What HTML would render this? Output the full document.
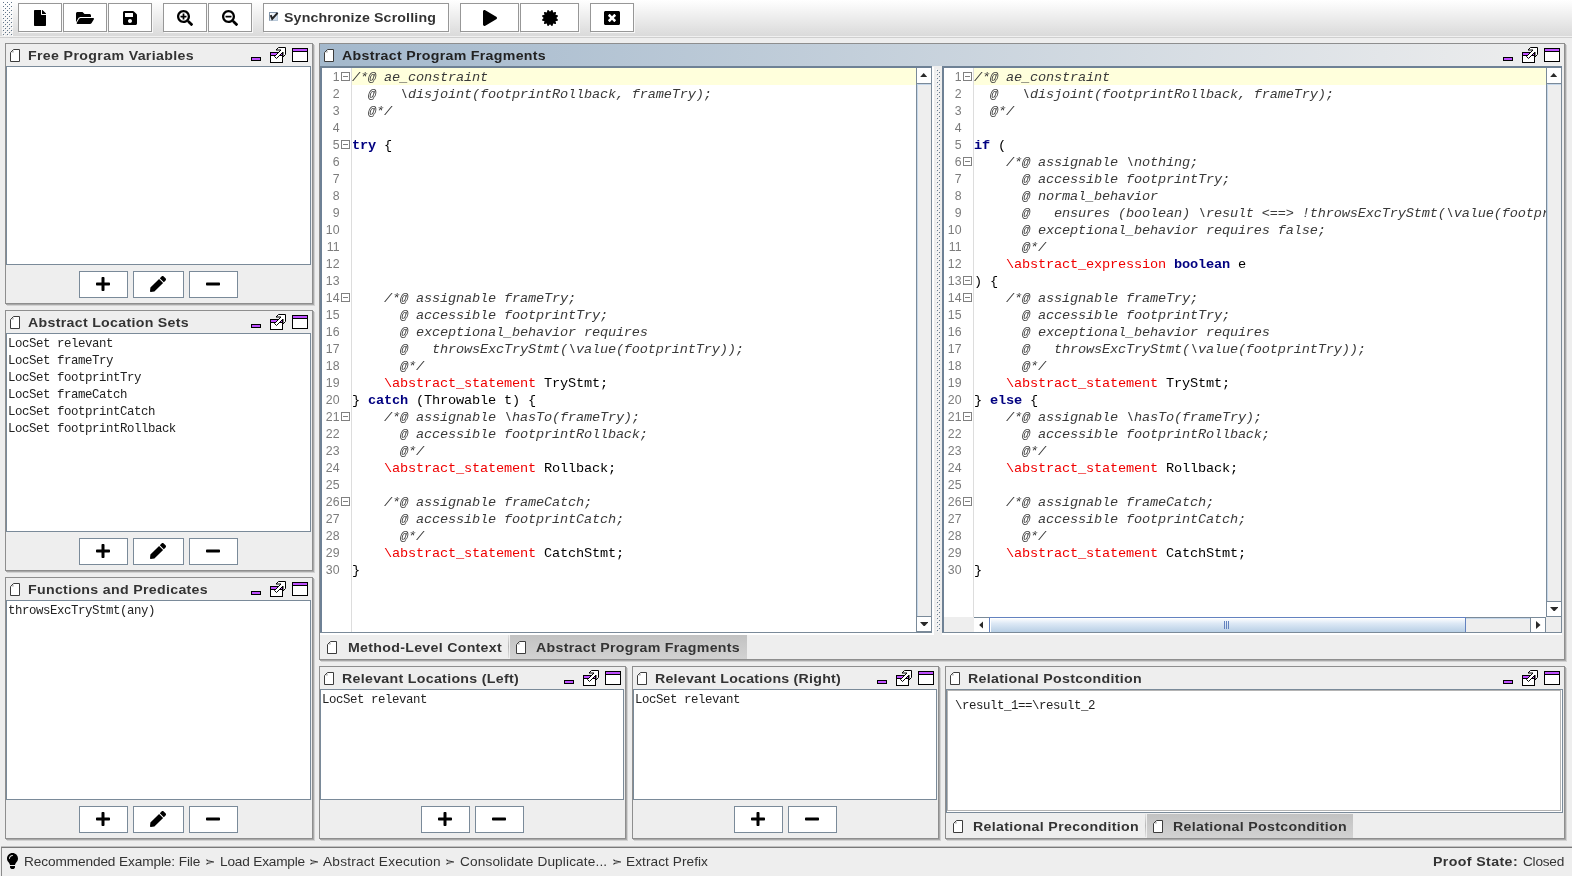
<!DOCTYPE html>
<html><head><meta charset="utf-8"><title>REFINITY</title><style>
html,body{margin:0;padding:0}
body{width:1572px;height:878px;background:#eeeeee;position:relative;overflow:hidden;font-family:"Liberation Sans",sans-serif}
div,span,svg{position:absolute;display:block}
.t,.m,.cl,.ln{will-change:transform}
.t{white-space:pre;font-family:"Liberation Sans",sans-serif}
.m{white-space:pre;font-family:"Liberation Mono",monospace}
.cl{left:0;height:17px;line-height:18px;white-space:pre;font-family:"Liberation Mono",monospace;font-size:13.6px;letter-spacing:-0.1613px}
.cl span{position:static;display:inline}
.cc{color:#3a3a3a;font-style:italic}
.ck{color:#000080;font-weight:bold}
.cn{color:#000}
.cr{color:#f00000}
.ln{text-align:right;height:17px;line-height:17px;font-size:12.3px;color:#7c7c7c;font-family:"Liberation Sans",sans-serif}
</style></head><body>
<div style="left:0px;top:0px;width:1572px;height:36px;background:linear-gradient(#ffffff,#dadada)"></div>
<div style="left:0px;top:36px;width:1572px;height:1px;background:#f0f0f0"></div>
<div style="left:0px;top:37px;width:1572px;height:1px;background:#cfcfcf"></div>
<svg class="i" style="left:2px;top:2px;width:11px;height:34px" viewBox="0 0 11 34"><defs><pattern id="gp" width="4" height="4" patternUnits="userSpaceOnUse"><rect width="4" height="4" fill="#fff" fill-opacity="0.55"/><rect x="1" y="0" width="1" height="1" fill="#61758a"/><rect x="3" y="2" width="1" height="1" fill="#61758a"/><rect x="2" y="1" width="1" height="1" fill="#fff"/><rect x="0" y="3" width="1" height="1" fill="#fff"/></pattern></defs><rect width="11" height="34" fill="url(#gp)"/></svg>
<div style="left:18px;top:3px;width:44px;height:29px;background:#fff;border:1px solid #979797;box-sizing:border-box;box-shadow:1px 1px 0 #f8f8f8"></div>
<svg class="i" style="left:34px;top:10px;width:12.00px;height:16px" viewBox="0 0 384 512"><path fill="#000" d="M224 136V0H24C10.7 0 0 10.7 0 24v464c0 13.3 10.7 24 24 24h336c13.3 0 24-10.7 24-24V160H248c-13.2 0-24-10.8-24-24zm160-14.1v6.1H256V0h6.1c6.4 0 12.5 2.5 17 7l97.9 98c4.5 4.500 7 10.600 7 16.900z"/></svg>
<div style="left:63px;top:3px;width:44px;height:29px;background:#fff;border:1px solid #979797;box-sizing:border-box;box-shadow:1px 1px 0 #f8f8f8"></div>
<svg class="i" style="left:76px;top:10px;width:18.00px;height:16px" viewBox="0 0 576 512"><path fill="#000" d="M572.694 292.093L500.270 416.248A63.997 63.997 0 0 1 444.989 448H45.025c-18.523 0-30.064-20.093-20.731-36.093l72.424-124.155A64 64 0 0 1 152 256h399.964c18.523 0 30.064 20.093 20.730 36.093zM152 224h328v-48c0-26.510-21.490-48-48-48H272l-64-64H48C21.490 64 0 85.490 0 112v278.046l69.077-118.418C86.214 242.250 117.989 224 152 224z"/></svg>
<div style="left:108px;top:3px;width:44px;height:29px;background:#fff;border:1px solid #979797;box-sizing:border-box;box-shadow:1px 1px 0 #f8f8f8"></div>
<svg class="i" style="left:123px;top:10px;width:14.00px;height:16px" viewBox="0 0 448 512"><path fill="#000" d="M433.941 129.941l-83.882-83.882A48 48 0 0 0 316.118 32H48C21.490 32 0 53.490 0 80v352c0 26.510 21.490 48 48 48h352c26.510 0 48-21.490 48-48V163.882a48 48 0 0 0-14.059-33.941zM224 416c-35.346 0-64-28.654-64-64 0-35.346 28.654-64 64-64s64 28.654 64 64c0 35.346-28.654 64-64 64zm96-304.520V212c0 6.627-5.373 12-12 12H76c-6.627 0-12-5.373-12-12V108c0-6.627 5.373-12 12-12h228.520c3.183 0 6.235 1.264 8.485 3.515l3.480 3.480A11.996 11.996 0 0 1 320 111.480z"/></svg>
<div style="left:163px;top:3px;width:44px;height:29px;background:#fff;border:1px solid #979797;box-sizing:border-box;box-shadow:1px 1px 0 #f8f8f8"></div>
<svg class="i" style="left:177px;top:10px;width:16.00px;height:16px" viewBox="0 0 512 512"><path fill="#000" d="M304 192v32c0 6.600-5.400 12-12 12h-56v56c0 6.600-5.400 12-12 12h-32c-6.600 0-12-5.400-12-12v-56h-56c-6.600 0-12-5.400-12-12v-32c0-6.600 5.400-12 12-12h56v-56c0-6.600 5.400-12 12-12h32c6.600 0 12 5.400 12 12v56h56c6.600 0 12 5.400 12 12zm201 284.700L476.700 505c-9.400 9.400-24.600 9.400-33.900 0L343 405.300c-4.500-4.500-7-10.600-7-17V372c-35.300 27.600-79.700 44-128 44C93.100 416 0 322.900 0 208S93.100 0 208 0s208 93.100 208 208c0 48.300-16.400 92.700-44 128h16.300c6.400 0 12.500 2.500 17 7l99.700 99.700c9.300 9.400 9.300 24.600 0 34zM344 208c0-75.200-60.800-136-136-136S72 132.800 72 208s60.800 136 136 136 136-60.800 136-136z"/></svg>
<div style="left:208px;top:3px;width:44px;height:29px;background:#fff;border:1px solid #979797;box-sizing:border-box;box-shadow:1px 1px 0 #f8f8f8"></div>
<svg class="i" style="left:222px;top:10px;width:16.00px;height:16px" viewBox="0 0 512 512"><path fill="#000" d="M304 192v32c0 6.600-5.400 12-12 12H124c-6.600 0-12-5.400-12-12v-32c0-6.600 5.400-12 12-12h168c6.600 0 12 5.400 12 12zm201 284.700L476.700 505c-9.400 9.400-24.600 9.400-33.900 0L343 405.300c-4.500-4.500-7-10.600-7-17V372c-35.300 27.600-79.700 44-128 44C93.100 416 0 322.900 0 208S93.100 0 208 0s208 93.100 208 208c0 48.300-16.400 92.700-44 128h16.300c6.400 0 12.500 2.500 17 7l99.700 99.700c9.300 9.400 9.300 24.600 0 34zM344 208c0-75.200-60.800-136-136-136S72 132.800 72 208s60.800 136 136 136 136-60.800 136-136z"/></svg>
<div style="left:263px;top:3px;width:186px;height:29px;background:#fff;border:1px solid #979797;box-sizing:border-box;box-shadow:1px 1px 0 #f8f8f8"></div>
<div style="left:269px;top:12px;width:9px;height:9px;background:linear-gradient(135deg,#fff,#c8d6e6);border:1px solid #9aabbd;border-color:#8497ab #b8c8d8 #b8c8d8 #8497ab;box-sizing:border-box"></div>
<svg class="i" style="left:269px;top:11px;width:11px;height:11px" viewBox="0 0 11 11"><path d="M1.7 4.2 L3.2 7.8 L8.6 1.8" stroke="#222" stroke-width="2" fill="none" stroke-linejoin="miter"/></svg>
<span class="t" style="left:283.5px;top:11.00px;font-size:13px;line-height:13px;font-weight:bold;letter-spacing:0.139px;transform-origin:0 50%;transform:scaleX(1.09);color:#333;">Synchronize Scrolling</span>
<div style="left:460px;top:3px;width:59px;height:29px;background:#fff;border:1px solid #979797;box-sizing:border-box;box-shadow:1px 1px 0 #f8f8f8"></div>
<svg class="i" style="left:483px;top:10px;width:14.00px;height:16px" viewBox="0 0 448 512"><path fill="#000" d="M424.400 214.700L72.400 6.600C43.800-10.300 0 6.100 0 47.900V464c0 37.500 40.700 60.100 72.400 41.300l352-208c31.400-18.500 31.500-64.100 0-82.600z"/></svg>
<div style="left:520px;top:3px;width:59px;height:29px;background:#fff;border:1px solid #979797;box-sizing:border-box;box-shadow:1px 1px 0 #f8f8f8"></div>
<svg class="i" style="left:542px;top:10px;width:16px;height:16px" viewBox="-0.5 -1408.3488372093022 1537.0 1536.8488372093022" preserveAspectRatio="xMidYMid meet"><path transform="scale(1,-1)" fill="#000" d="M1376 640 1514 505Q1544 477 1534 435Q1522 394 1482 384L1294 336L1347 150Q1359 109 1328 80Q1299 49 1258 61L1072 114L1024 -74Q1014 -114 973 -126Q961 -128 954 -128Q923 -128 903 -106L768 32L633 -106Q605 -136 563 -126Q522 -115 512 -74L464 114L278 61Q237 49 208 80Q177 109 189 150L242 336L54 384Q14 394 2 435Q-8 477 22 505L160 640L22 775Q-8 803 2 845Q14 886 54 896L242 944L189 1130Q177 1171 208 1200Q237 1231 278 1219L464 1166L512 1354Q522 1395 563 1405Q604 1417 633 1386L768 1247L903 1386Q932 1416 973 1405Q1014 1395 1024 1354L1072 1166L1258 1219Q1299 1231 1328 1200Q1359 1171 1347 1130L1294 944L1482 896Q1522 886 1534 845Q1544 803 1514 775Z"/></svg>
<div style="left:590px;top:3px;width:44px;height:29px;background:#fff;border:1px solid #979797;box-sizing:border-box;box-shadow:1px 1px 0 #f8f8f8"></div>
<svg class="i" style="left:604px;top:10px;width:16.00px;height:16px" viewBox="0 0 512 512"><path fill="#000" d="M464 32H48C21.500 32 0 53.500 0 80v352c0 26.500 21.500 48 48 48h416c26.500 0 48-21.500 48-48V80c0-26.500-21.500-48-48-48zm-83.600 290.500c4.800 4.800 4.800 12.600 0 17.400l-40.500 40.500c-4.800 4.800-12.600 4.800-17.400 0L256 313.300l-66.500 67.100c-4.800 4.800-12.600 4.800-17.400 0l-40.500-40.500c-4.800-4.800-4.800-12.600 0-17.400l67.100-66.500-67.100-66.500c-4.800-4.800-4.800-12.600 0-17.400l40.500-40.500c4.800-4.800 12.600-4.800 17.400 0l66.500 67.100 66.500-67.100c4.800-4.800 12.600-4.800 17.400 0l40.500 40.500c4.800 4.800 4.800 12.600 0 17.400L313.300 256l67.100 66.500z"/></svg>
<div style="left:5px;top:43px;width:308px;height:261px;border:1px solid #8e8e8e;box-sizing:border-box;box-shadow:1px 1px 0 #a8a8a8,2px 2px 0 #d2d2d2;background:#eeeeee"></div>
<svg class="i" style="left:10px;top:49px;width:11px;height:13px" viewBox="0 0 11 13"><path d="M3.5 0.5 H9.5 V12.5 H0.5 V3.5 Z" fill="#fff" stroke="#3c3c3c" stroke-width="1"/><path d="M1.2 3.6 H3.6 V1.2 Z" fill="#a8a8a8"/></svg>
<span class="t" style="left:28px;top:49.00px;font-size:13px;line-height:13px;font-weight:bold;letter-spacing:0.321px;transform-origin:0 50%;transform:scaleX(1.09);color:#333;">Free Program Variables</span>
<div style="left:251px;top:57px;width:10px;height:4px;background:#bf50ff;border:1px solid #000;box-sizing:border-box"></div>
<svg class="i" style="left:270px;top:47px;width:17px;height:17px" viewBox="0 0 17 17"><rect x="0.5" y="5.5" width="12" height="10" fill="#fff" stroke="#000"/><rect x="1" y="6" width="11" height="2" fill="#bf50ff"/><rect x="1" y="8" width="11" height="1" fill="#000"/><path d="M8.5 0.5 H15.5 V7.5 L13 10 V5 L6.5 11.5 L4.5 9.5 L11 3 H6 Z" fill="#fff" stroke="#000" stroke-width="1" stroke-linejoin="miter"/></svg>
<svg class="i" style="left:292px;top:48px;width:16px;height:14px" viewBox="0 0 16 14"><rect x="0.5" y="0.5" width="15" height="13" fill="#fff" stroke="#000"/><rect x="1" y="1" width="14" height="2" fill="#bf50ff"/><rect x="1" y="3" width="14" height="1" fill="#000"/></svg>
<div style="left:6px;top:66px;width:305px;height:199px;background:#fff;border:1px solid #7a8a99;box-sizing:border-box"></div>
<div style="left:79px;top:271px;width:49px;height:27px;background:#fff;border:1px solid #7a8a99;box-sizing:border-box"></div>
<svg class="i" style="left:96.0px;top:275.9px;width:14.00px;height:16px" viewBox="0 0 448 512"><path fill="#000" d="M416 208H272V64c0-17.670-14.330-32-32-32h-32c-17.670 0-32 14.330-32 32v144H32c-17.670 0-32 14.330-32 32v32c0 17.670 14.330 32 32 32h144v144c0 17.670 14.330 32 32 32h32c17.670 0 32-14.330 32-32V304h144c17.670 0 32-14.330 32-32v-32c0-17.670-14.330-32-32-32z"/></svg>
<div style="left:133px;top:271px;width:51px;height:27px;background:#fff;border:1px solid #7a8a99;box-sizing:border-box"></div>
<svg class="i" style="left:149.5px;top:275.6px;width:16.00px;height:16px" viewBox="0 0 512 512"><path fill="#000" d="M290.740 93.240l128.020 128.020-277.990 277.990-114.140 12.600C11.350 513.540-1.560 500.620.140 485.340l12.700-114.220 277.900-277.880zm207.200-19.060l-60.110-60.110c-18.750-18.750-49.160-18.750-67.910 0l-56.550 56.550 128.020 128.020 56.550-56.550c18.750-18.760 18.750-49.160 0-67.910z"/></svg>
<div style="left:189px;top:271px;width:49px;height:27px;background:#fff;border:1px solid #7a8a99;box-sizing:border-box"></div>
<svg class="i" style="left:206.0px;top:275.9px;width:14.00px;height:16px" viewBox="0 0 448 512"><path fill="#000" d="M416 208H32c-17.670 0-32 14.330-32 32v32c0 17.670 14.330 32 32 32h384c17.670 0 32-14.330 32-32v-32c0-17.670-14.330-32-32-32z"/></svg>
<div style="left:5px;top:310px;width:308px;height:261px;border:1px solid #8e8e8e;box-sizing:border-box;box-shadow:1px 1px 0 #a8a8a8,2px 2px 0 #d2d2d2;background:#eeeeee"></div>
<svg class="i" style="left:10px;top:316px;width:11px;height:13px" viewBox="0 0 11 13"><path d="M3.5 0.5 H9.5 V12.5 H0.5 V3.5 Z" fill="#fff" stroke="#3c3c3c" stroke-width="1"/><path d="M1.2 3.6 H3.6 V1.2 Z" fill="#a8a8a8"/></svg>
<span class="t" style="left:28px;top:316.00px;font-size:13px;line-height:13px;font-weight:bold;letter-spacing:0.278px;transform-origin:0 50%;transform:scaleX(1.09);color:#333;">Abstract Location Sets</span>
<div style="left:251px;top:324px;width:10px;height:4px;background:#bf50ff;border:1px solid #000;box-sizing:border-box"></div>
<svg class="i" style="left:270px;top:314px;width:17px;height:17px" viewBox="0 0 17 17"><rect x="0.5" y="5.5" width="12" height="10" fill="#fff" stroke="#000"/><rect x="1" y="6" width="11" height="2" fill="#bf50ff"/><rect x="1" y="8" width="11" height="1" fill="#000"/><path d="M8.5 0.5 H15.5 V7.5 L13 10 V5 L6.5 11.5 L4.5 9.5 L11 3 H6 Z" fill="#fff" stroke="#000" stroke-width="1" stroke-linejoin="miter"/></svg>
<svg class="i" style="left:292px;top:315px;width:16px;height:14px" viewBox="0 0 16 14"><rect x="0.5" y="0.5" width="15" height="13" fill="#fff" stroke="#000"/><rect x="1" y="1" width="14" height="2" fill="#bf50ff"/><rect x="1" y="3" width="14" height="1" fill="#000"/></svg>
<div style="left:6px;top:333px;width:305px;height:199px;background:#fff;border:1px solid #7a8a99;box-sizing:border-box"></div>
<span class="m" style="left:8px;top:337.50px;font-size:12.4px;line-height:12.4px;color:#222;letter-spacing:-0.4412px;">LocSet relevant</span>
<span class="m" style="left:8px;top:354.50px;font-size:12.4px;line-height:12.4px;color:#222;letter-spacing:-0.4412px;">LocSet frameTry</span>
<span class="m" style="left:8px;top:371.50px;font-size:12.4px;line-height:12.4px;color:#222;letter-spacing:-0.4412px;">LocSet footprintTry</span>
<span class="m" style="left:8px;top:388.50px;font-size:12.4px;line-height:12.4px;color:#222;letter-spacing:-0.4412px;">LocSet frameCatch</span>
<span class="m" style="left:8px;top:405.50px;font-size:12.4px;line-height:12.4px;color:#222;letter-spacing:-0.4412px;">LocSet footprintCatch</span>
<span class="m" style="left:8px;top:422.50px;font-size:12.4px;line-height:12.4px;color:#222;letter-spacing:-0.4412px;">LocSet footprintRollback</span>
<div style="left:79px;top:538px;width:49px;height:27px;background:#fff;border:1px solid #7a8a99;box-sizing:border-box"></div>
<svg class="i" style="left:96.0px;top:542.9px;width:14.00px;height:16px" viewBox="0 0 448 512"><path fill="#000" d="M416 208H272V64c0-17.670-14.330-32-32-32h-32c-17.670 0-32 14.330-32 32v144H32c-17.670 0-32 14.330-32 32v32c0 17.670 14.330 32 32 32h144v144c0 17.670 14.330 32 32 32h32c17.670 0 32-14.330 32-32V304h144c17.670 0 32-14.330 32-32v-32c0-17.670-14.330-32-32-32z"/></svg>
<div style="left:133px;top:538px;width:51px;height:27px;background:#fff;border:1px solid #7a8a99;box-sizing:border-box"></div>
<svg class="i" style="left:149.5px;top:542.6px;width:16.00px;height:16px" viewBox="0 0 512 512"><path fill="#000" d="M290.740 93.240l128.020 128.020-277.990 277.990-114.140 12.600C11.350 513.540-1.560 500.620.140 485.340l12.700-114.220 277.900-277.880zm207.200-19.060l-60.110-60.110c-18.750-18.750-49.160-18.750-67.910 0l-56.550 56.550 128.020 128.020 56.550-56.550c18.750-18.760 18.750-49.160 0-67.910z"/></svg>
<div style="left:189px;top:538px;width:49px;height:27px;background:#fff;border:1px solid #7a8a99;box-sizing:border-box"></div>
<svg class="i" style="left:206.0px;top:542.9px;width:14.00px;height:16px" viewBox="0 0 448 512"><path fill="#000" d="M416 208H32c-17.670 0-32 14.330-32 32v32c0 17.670 14.330 32 32 32h384c17.670 0 32-14.330 32-32v-32c0-17.670-14.330-32-32-32z"/></svg>
<div style="left:5px;top:577px;width:308px;height:262px;border:1px solid #8e8e8e;box-sizing:border-box;box-shadow:1px 1px 0 #a8a8a8,2px 2px 0 #d2d2d2;background:#eeeeee"></div>
<svg class="i" style="left:10px;top:583px;width:11px;height:13px" viewBox="0 0 11 13"><path d="M3.5 0.5 H9.5 V12.5 H0.5 V3.5 Z" fill="#fff" stroke="#3c3c3c" stroke-width="1"/><path d="M1.2 3.6 H3.6 V1.2 Z" fill="#a8a8a8"/></svg>
<span class="t" style="left:28px;top:583.00px;font-size:13px;line-height:13px;font-weight:bold;letter-spacing:0.289px;transform-origin:0 50%;transform:scaleX(1.09);color:#333;">Functions and Predicates</span>
<div style="left:251px;top:591px;width:10px;height:4px;background:#bf50ff;border:1px solid #000;box-sizing:border-box"></div>
<svg class="i" style="left:270px;top:581px;width:17px;height:17px" viewBox="0 0 17 17"><rect x="0.5" y="5.5" width="12" height="10" fill="#fff" stroke="#000"/><rect x="1" y="6" width="11" height="2" fill="#bf50ff"/><rect x="1" y="8" width="11" height="1" fill="#000"/><path d="M8.5 0.5 H15.5 V7.5 L13 10 V5 L6.5 11.5 L4.5 9.5 L11 3 H6 Z" fill="#fff" stroke="#000" stroke-width="1" stroke-linejoin="miter"/></svg>
<svg class="i" style="left:292px;top:582px;width:16px;height:14px" viewBox="0 0 16 14"><rect x="0.5" y="0.5" width="15" height="13" fill="#fff" stroke="#000"/><rect x="1" y="1" width="14" height="2" fill="#bf50ff"/><rect x="1" y="3" width="14" height="1" fill="#000"/></svg>
<div style="left:6px;top:600px;width:305px;height:200px;background:#fff;border:1px solid #7a8a99;box-sizing:border-box"></div>
<span class="m" style="left:8px;top:604.50px;font-size:12.4px;line-height:12.4px;color:#222;letter-spacing:-0.4412px;">throwsExcTryStmt(any)</span>
<div style="left:79px;top:806px;width:49px;height:27px;background:#fff;border:1px solid #7a8a99;box-sizing:border-box"></div>
<svg class="i" style="left:96.0px;top:810.9px;width:14.00px;height:16px" viewBox="0 0 448 512"><path fill="#000" d="M416 208H272V64c0-17.670-14.330-32-32-32h-32c-17.670 0-32 14.330-32 32v144H32c-17.670 0-32 14.330-32 32v32c0 17.670 14.330 32 32 32h144v144c0 17.670 14.330 32 32 32h32c17.670 0 32-14.330 32-32V304h144c17.670 0 32-14.330 32-32v-32c0-17.670-14.330-32-32-32z"/></svg>
<div style="left:133px;top:806px;width:51px;height:27px;background:#fff;border:1px solid #7a8a99;box-sizing:border-box"></div>
<svg class="i" style="left:149.5px;top:810.6px;width:16.00px;height:16px" viewBox="0 0 512 512"><path fill="#000" d="M290.740 93.240l128.020 128.020-277.990 277.990-114.140 12.600C11.350 513.540-1.560 500.620.140 485.340l12.700-114.220 277.900-277.880zm207.200-19.060l-60.110-60.110c-18.750-18.750-49.160-18.750-67.910 0l-56.550 56.550 128.020 128.020 56.550-56.550c18.750-18.760 18.750-49.160 0-67.910z"/></svg>
<div style="left:189px;top:806px;width:49px;height:27px;background:#fff;border:1px solid #7a8a99;box-sizing:border-box"></div>
<svg class="i" style="left:206.0px;top:810.9px;width:14.00px;height:16px" viewBox="0 0 448 512"><path fill="#000" d="M416 208H32c-17.670 0-32 14.330-32 32v32c0 17.670 14.330 32 32 32h384c17.670 0 32-14.330 32-32v-32c0-17.670-14.330-32-32-32z"/></svg>
<div style="left:319px;top:666px;width:307px;height:173px;border:1px solid #8e8e8e;box-sizing:border-box;box-shadow:1px 1px 0 #a8a8a8,2px 2px 0 #d2d2d2;background:#eeeeee"></div>
<svg class="i" style="left:324px;top:672px;width:11px;height:13px" viewBox="0 0 11 13"><path d="M3.5 0.5 H9.5 V12.5 H0.5 V3.5 Z" fill="#fff" stroke="#3c3c3c" stroke-width="1"/><path d="M1.2 3.6 H3.6 V1.2 Z" fill="#a8a8a8"/></svg>
<span class="t" style="left:342px;top:672.00px;font-size:13px;line-height:13px;font-weight:bold;letter-spacing:0.284px;transform-origin:0 50%;transform:scaleX(1.09);color:#333;">Relevant Locations (Left)</span>
<div style="left:564px;top:680px;width:10px;height:4px;background:#bf50ff;border:1px solid #000;box-sizing:border-box"></div>
<svg class="i" style="left:583px;top:670px;width:17px;height:17px" viewBox="0 0 17 17"><rect x="0.5" y="5.5" width="12" height="10" fill="#fff" stroke="#000"/><rect x="1" y="6" width="11" height="2" fill="#bf50ff"/><rect x="1" y="8" width="11" height="1" fill="#000"/><path d="M8.5 0.5 H15.5 V7.5 L13 10 V5 L6.5 11.5 L4.5 9.5 L11 3 H6 Z" fill="#fff" stroke="#000" stroke-width="1" stroke-linejoin="miter"/></svg>
<svg class="i" style="left:605px;top:671px;width:16px;height:14px" viewBox="0 0 16 14"><rect x="0.5" y="0.5" width="15" height="13" fill="#fff" stroke="#000"/><rect x="1" y="1" width="14" height="2" fill="#bf50ff"/><rect x="1" y="3" width="14" height="1" fill="#000"/></svg>
<div style="left:320px;top:689px;width:304px;height:111px;background:#fff;border:1px solid #7a8a99;box-sizing:border-box"></div>
<span class="m" style="left:322px;top:693.50px;font-size:12.4px;line-height:12.4px;color:#222;letter-spacing:-0.4412px;">LocSet relevant</span>
<div style="left:421px;top:806px;width:49px;height:27px;background:#fff;border:1px solid #7a8a99;box-sizing:border-box"></div>
<svg class="i" style="left:438.0px;top:810.9px;width:14.00px;height:16px" viewBox="0 0 448 512"><path fill="#000" d="M416 208H272V64c0-17.670-14.330-32-32-32h-32c-17.670 0-32 14.330-32 32v144H32c-17.670 0-32 14.330-32 32v32c0 17.670 14.330 32 32 32h144v144c0 17.670 14.330 32 32 32h32c17.670 0 32-14.330 32-32V304h144c17.670 0 32-14.330 32-32v-32c0-17.670-14.330-32-32-32z"/></svg>
<div style="left:475px;top:806px;width:49px;height:27px;background:#fff;border:1px solid #7a8a99;box-sizing:border-box"></div>
<svg class="i" style="left:492.0px;top:810.9px;width:14.00px;height:16px" viewBox="0 0 448 512"><path fill="#000" d="M416 208H32c-17.670 0-32 14.330-32 32v32c0 17.670 14.330 32 32 32h384c17.670 0 32-14.330 32-32v-32c0-17.670-14.330-32-32-32z"/></svg>
<div style="left:632px;top:666px;width:307px;height:173px;border:1px solid #8e8e8e;box-sizing:border-box;box-shadow:1px 1px 0 #a8a8a8,2px 2px 0 #d2d2d2;background:#eeeeee"></div>
<svg class="i" style="left:637px;top:672px;width:11px;height:13px" viewBox="0 0 11 13"><path d="M3.5 0.5 H9.5 V12.5 H0.5 V3.5 Z" fill="#fff" stroke="#3c3c3c" stroke-width="1"/><path d="M1.2 3.6 H3.6 V1.2 Z" fill="#a8a8a8"/></svg>
<span class="t" style="left:655px;top:672.00px;font-size:13px;line-height:13px;font-weight:bold;letter-spacing:0.229px;transform-origin:0 50%;transform:scaleX(1.09);color:#333;">Relevant Locations (Right)</span>
<div style="left:877px;top:680px;width:10px;height:4px;background:#bf50ff;border:1px solid #000;box-sizing:border-box"></div>
<svg class="i" style="left:896px;top:670px;width:17px;height:17px" viewBox="0 0 17 17"><rect x="0.5" y="5.5" width="12" height="10" fill="#fff" stroke="#000"/><rect x="1" y="6" width="11" height="2" fill="#bf50ff"/><rect x="1" y="8" width="11" height="1" fill="#000"/><path d="M8.5 0.5 H15.5 V7.5 L13 10 V5 L6.5 11.5 L4.5 9.5 L11 3 H6 Z" fill="#fff" stroke="#000" stroke-width="1" stroke-linejoin="miter"/></svg>
<svg class="i" style="left:918px;top:671px;width:16px;height:14px" viewBox="0 0 16 14"><rect x="0.5" y="0.5" width="15" height="13" fill="#fff" stroke="#000"/><rect x="1" y="1" width="14" height="2" fill="#bf50ff"/><rect x="1" y="3" width="14" height="1" fill="#000"/></svg>
<div style="left:633px;top:689px;width:304px;height:111px;background:#fff;border:1px solid #7a8a99;box-sizing:border-box"></div>
<span class="m" style="left:635px;top:693.50px;font-size:12.4px;line-height:12.4px;color:#222;letter-spacing:-0.4412px;">LocSet relevant</span>
<div style="left:734px;top:806px;width:49px;height:27px;background:#fff;border:1px solid #7a8a99;box-sizing:border-box"></div>
<svg class="i" style="left:751.0px;top:810.9px;width:14.00px;height:16px" viewBox="0 0 448 512"><path fill="#000" d="M416 208H272V64c0-17.670-14.330-32-32-32h-32c-17.670 0-32 14.330-32 32v144H32c-17.670 0-32 14.330-32 32v32c0 17.670 14.330 32 32 32h144v144c0 17.670 14.330 32 32 32h32c17.670 0 32-14.330 32-32V304h144c17.670 0 32-14.330 32-32v-32c0-17.670-14.330-32-32-32z"/></svg>
<div style="left:788px;top:806px;width:49px;height:27px;background:#fff;border:1px solid #7a8a99;box-sizing:border-box"></div>
<svg class="i" style="left:805.0px;top:810.9px;width:14.00px;height:16px" viewBox="0 0 448 512"><path fill="#000" d="M416 208H32c-17.670 0-32 14.330-32 32v32c0 17.670 14.330 32 32 32h384c17.670 0 32-14.330 32-32v-32c0-17.670-14.330-32-32-32z"/></svg>
<div style="left:945px;top:666px;width:620px;height:173px;border:1px solid #8e8e8e;box-sizing:border-box;box-shadow:1px 1px 0 #a8a8a8,2px 2px 0 #d2d2d2;background:#eeeeee"></div>
<svg class="i" style="left:950px;top:672px;width:11px;height:13px" viewBox="0 0 11 13"><path d="M3.5 0.5 H9.5 V12.5 H0.5 V3.5 Z" fill="#fff" stroke="#3c3c3c" stroke-width="1"/><path d="M1.2 3.6 H3.6 V1.2 Z" fill="#a8a8a8"/></svg>
<span class="t" style="left:968px;top:672.00px;font-size:13px;line-height:13px;font-weight:bold;letter-spacing:0.302px;transform-origin:0 50%;transform:scaleX(1.09);color:#333;">Relational Postcondition</span>
<div style="left:1503px;top:680px;width:10px;height:4px;background:#bf50ff;border:1px solid #000;box-sizing:border-box"></div>
<svg class="i" style="left:1522px;top:670px;width:17px;height:17px" viewBox="0 0 17 17"><rect x="0.5" y="5.5" width="12" height="10" fill="#fff" stroke="#000"/><rect x="1" y="6" width="11" height="2" fill="#bf50ff"/><rect x="1" y="8" width="11" height="1" fill="#000"/><path d="M8.5 0.5 H15.5 V7.5 L13 10 V5 L6.5 11.5 L4.5 9.5 L11 3 H6 Z" fill="#fff" stroke="#000" stroke-width="1" stroke-linejoin="miter"/></svg>
<svg class="i" style="left:1544px;top:671px;width:16px;height:14px" viewBox="0 0 16 14"><rect x="0.5" y="0.5" width="15" height="13" fill="#fff" stroke="#000"/><rect x="1" y="1" width="14" height="2" fill="#bf50ff"/><rect x="1" y="3" width="14" height="1" fill="#000"/></svg>
<div style="left:946px;top:689px;width:617px;height:124px;background:#fff;border:1px solid #7a8a99;box-sizing:border-box"></div>
<div style="left:947px;top:690px;width:614px;height:121px;border:1px solid #b4b4b4;box-sizing:border-box"></div>
<span class="m" style="left:955px;top:699.50px;font-size:12.4px;line-height:12.4px;color:#222;letter-spacing:-0.4412px;">\result_1==\result_2</span>
<svg class="i" style="left:953px;top:820px;width:11px;height:13px" viewBox="0 0 11 13"><path d="M3.5 0.5 H9.5 V12.5 H0.5 V3.5 Z" fill="#fff" stroke="#3c3c3c" stroke-width="1"/><path d="M1.2 3.6 H3.6 V1.2 Z" fill="#a8a8a8"/></svg>
<span class="t" style="left:973px;top:820.00px;font-size:13px;line-height:13px;font-weight:bold;letter-spacing:0.309px;transform-origin:0 50%;transform:scaleX(1.09);color:#333;">Relational Precondition</span>
<div style="left:1145px;top:814px;width:1px;height:23px;background:linear-gradient(#e0e0e0,#b8b8b8,#e0e0e0)"></div>
<div style="left:1147px;top:814px;width:206px;height:24px;background:linear-gradient(#c2c2c2,#d2d2d2)"></div>
<svg class="i" style="left:1153px;top:820px;width:11px;height:13px" viewBox="0 0 11 13"><path d="M3.5 0.5 H9.5 V12.5 H0.5 V3.5 Z" fill="#fff" stroke="#3c3c3c" stroke-width="1"/><path d="M1.2 3.6 H3.6 V1.2 Z" fill="#a8a8a8"/></svg>
<span class="t" style="left:1173px;top:820.00px;font-size:13px;line-height:13px;font-weight:bold;letter-spacing:0.302px;transform-origin:0 50%;transform:scaleX(1.09);color:#333;">Relational Postcondition</span>
<div style="left:1px;top:846px;width:1571px;height:1px;background:#c0c0c0"></div>
<div style="left:1px;top:847px;width:1571px;height:30px;border-top:1px solid #787878;border-left:1px solid #8a8a8a;box-sizing:border-box"></div>
<div style="left:0px;top:876px;width:1572px;height:2px;background:#fff"></div>
<svg class="i" style="left:6.75px;top:853px;width:11.00px;height:16px" viewBox="0 0 352 512"><path fill="#000" d="M96.060 454.350c.01 6.290 1.870 12.450 5.360 17.690l17.090 25.690a31.990 31.990 0 0 0 26.640 14.280h61.710a31.990 31.990 0 0 0 26.640-14.280l17.090-25.690a31.989 31.989 0 0 0 5.360-17.690l.04-38.350H96.010l.05 38.350zM0 176c0 44.370 16.450 84.850 43.560 115.780 16.520 18.850 42.360 58.230 52.210 91.450.04.260.07.520.11.780h160.240c.04-.26.070-.51.110-.780 9.850-33.220 35.690-72.600 52.210-91.450C335.550 260.850 352 220.370 352 176 352 78.610 272.910-.300 175.450 0 73.440.310 0 82.970 0 176zm176-80c-44.110 0-80 35.890-80 80 0 8.840-7.160 16-16 16s-16-7.160-16-16c0-61.760 50.240-112 112-112 8.840 0 16 7.160 16 16s-7.160 16-16 16z"/></svg>
<span class="t" style="left:23.75px;top:855.00px;font-size:13px;line-height:13px;letter-spacing:-0.106px;transform-origin:0 50%;transform:scaleX(1.05);color:#333;">Recommended Example: File</span>
<svg class="i" style="left:205.5px;top:859px;width:8.5px;height:6px" viewBox="0 0 8.5 6"><path d="M0.4 0.6 L1.8 1.7 L8 3 L1.8 4.3 L0.4 5.4" stroke="#2e2e2e" stroke-width="1.15" fill="none" stroke-linejoin="round"/></svg>
<span class="t" style="left:219.5px;top:855.00px;font-size:13px;line-height:13px;letter-spacing:-0.180px;transform-origin:0 50%;transform:scaleX(1.05);color:#333;">Load Example</span>
<svg class="i" style="left:309.5px;top:859px;width:8.5px;height:6px" viewBox="0 0 8.5 6"><path d="M0.4 0.6 L1.8 1.7 L8 3 L1.8 4.3 L0.4 5.4" stroke="#2e2e2e" stroke-width="1.15" fill="none" stroke-linejoin="round"/></svg>
<span class="t" style="left:323px;top:855.00px;font-size:13px;line-height:13px;letter-spacing:0.209px;transform-origin:0 50%;transform:scaleX(1.05);color:#333;">Abstract Execution</span>
<svg class="i" style="left:445.75px;top:859px;width:8.5px;height:6px" viewBox="0 0 8.5 6"><path d="M0.4 0.6 L1.8 1.7 L8 3 L1.8 4.3 L0.4 5.4" stroke="#2e2e2e" stroke-width="1.15" fill="none" stroke-linejoin="round"/></svg>
<span class="t" style="left:459.5px;top:855.00px;font-size:13px;line-height:13px;letter-spacing:0.122px;transform-origin:0 50%;transform:scaleX(1.05);color:#333;">Consolidate Duplicate...</span>
<svg class="i" style="left:612.5px;top:859px;width:8.5px;height:6px" viewBox="0 0 8.5 6"><path d="M0.4 0.6 L1.8 1.7 L8 3 L1.8 4.3 L0.4 5.4" stroke="#2e2e2e" stroke-width="1.15" fill="none" stroke-linejoin="round"/></svg>
<span class="t" style="left:626.25px;top:855.00px;font-size:13px;line-height:13px;letter-spacing:0.057px;transform-origin:0 50%;transform:scaleX(1.05);color:#333;">Extract Prefix</span>
<span class="t" style="left:1432.5px;top:855.00px;font-size:13px;line-height:13px;font-weight:bold;letter-spacing:0.359px;transform-origin:0 50%;transform:scaleX(1.09);color:#333;">Proof State:</span>
<span class="t" style="left:1523px;top:855.00px;font-size:13px;line-height:13px;letter-spacing:-0.236px;transform-origin:0 50%;transform:scaleX(1.05);color:#333;">Closed</span>
<div style="left:319px;top:43px;width:1246px;height:617px;border:1px solid #8e8e8e;box-sizing:border-box;box-shadow:1px 1px 0 #a8a8a8,2px 2px 0 #d2d2d2;background:#eeeeee"></div>
<div style="left:320px;top:44px;width:1244px;height:22px;background:linear-gradient(90deg,#a3b8cc,#eeeeee)"></div>
<svg class="i" style="left:324px;top:49px;width:11px;height:13px" viewBox="0 0 11 13"><path d="M3.5 0.5 H9.5 V12.5 H0.5 V3.5 Z" fill="#fff" stroke="#3c3c3c" stroke-width="1"/><path d="M1.2 3.6 H3.6 V1.2 Z" fill="#a8a8a8"/></svg>
<span class="t" style="left:342px;top:49.00px;font-size:13px;line-height:13px;font-weight:bold;letter-spacing:0.280px;transform-origin:0 50%;transform:scaleX(1.09);color:#222;">Abstract Program Fragments</span>
<div style="left:1503px;top:57px;width:10px;height:4px;background:#bf50ff;border:1px solid #000;box-sizing:border-box"></div>
<svg class="i" style="left:1522px;top:47px;width:17px;height:17px" viewBox="0 0 17 17"><rect x="0.5" y="5.5" width="12" height="10" fill="#fff" stroke="#000"/><rect x="1" y="6" width="11" height="2" fill="#bf50ff"/><rect x="1" y="8" width="11" height="1" fill="#000"/><path d="M8.5 0.5 H15.5 V7.5 L13 10 V5 L6.5 11.5 L4.5 9.5 L11 3 H6 Z" fill="#fff" stroke="#000" stroke-width="1" stroke-linejoin="miter"/></svg>
<svg class="i" style="left:1544px;top:48px;width:16px;height:14px" viewBox="0 0 16 14"><rect x="0.5" y="0.5" width="15" height="13" fill="#fff" stroke="#000"/><rect x="1" y="1" width="14" height="2" fill="#bf50ff"/><rect x="1" y="3" width="14" height="1" fill="#000"/></svg>
<svg class="i" style="left:327px;top:641px;width:11px;height:13px" viewBox="0 0 11 13"><path d="M3.5 0.5 H9.5 V12.5 H0.5 V3.5 Z" fill="#fff" stroke="#3c3c3c" stroke-width="1"/><path d="M1.2 3.6 H3.6 V1.2 Z" fill="#a8a8a8"/></svg>
<span class="t" style="left:348px;top:641.00px;font-size:13px;line-height:13px;font-weight:bold;letter-spacing:0.275px;transform-origin:0 50%;transform:scaleX(1.09);color:#333;">Method-Level Context</span>
<div style="left:508px;top:635px;width:1px;height:23px;background:linear-gradient(#e0e0e0,#b8b8b8,#e0e0e0)"></div>
<div style="left:510px;top:635px;width:237px;height:24px;background:linear-gradient(#c2c2c2,#d2d2d2)"></div>
<svg class="i" style="left:516px;top:641px;width:11px;height:13px" viewBox="0 0 11 13"><path d="M3.5 0.5 H9.5 V12.5 H0.5 V3.5 Z" fill="#fff" stroke="#3c3c3c" stroke-width="1"/><path d="M1.2 3.6 H3.6 V1.2 Z" fill="#a8a8a8"/></svg>
<span class="t" style="left:536px;top:641.00px;font-size:13px;line-height:13px;font-weight:bold;letter-spacing:0.280px;transform-origin:0 50%;transform:scaleX(1.09);color:#333;">Abstract Program Fragments</span>
<div style="left:320px;top:66px;width:612px;height:567px;background:#6e8195"></div>
<div style="left:322px;top:68px;width:594px;height:564px;background:#fff"></div>
<div style="left:352px;top:68px;width:564px;height:17px;background:#ffffdc"></div>
<div style="left:351px;top:68px;width:1px;height:564px;background:#dddddd"></div>
<div style="left:352px;top:68px;width:564px;height:564px;overflow:hidden">
<div class="cl" style="top:1px"><span class="cc">/*@ ae_constraint</span></div>
<div class="cl" style="top:18px"><span class="cc">  @   \disjoint(footprintRollback, frameTry);</span></div>
<div class="cl" style="top:35px"><span class="cc">  @*/</span></div>
<div class="cl" style="top:69px"><span class="ck">try</span><span class="cn"> {</span></div>
<div class="cl" style="top:222px"><span class="cc">    /*@ assignable frameTry;</span></div>
<div class="cl" style="top:239px"><span class="cc">      @ accessible footprintTry;</span></div>
<div class="cl" style="top:256px"><span class="cc">      @ exceptional_behavior requires</span></div>
<div class="cl" style="top:273px"><span class="cc">      @   throwsExcTryStmt(\value(footprintTry));</span></div>
<div class="cl" style="top:290px"><span class="cc">      @*/</span></div>
<div class="cl" style="top:307px"><span class="cn">    </span><span class="cr">\abstract_statement</span><span class="cn"> TryStmt;</span></div>
<div class="cl" style="top:324px"><span class="cn">} </span><span class="ck">catch</span><span class="cn"> (Throwable t) {</span></div>
<div class="cl" style="top:341px"><span class="cc">    /*@ assignable \hasTo(frameTry);</span></div>
<div class="cl" style="top:358px"><span class="cc">      @ accessible footprintRollback;</span></div>
<div class="cl" style="top:375px"><span class="cc">      @*/</span></div>
<div class="cl" style="top:392px"><span class="cn">    </span><span class="cr">\abstract_statement</span><span class="cn"> Rollback;</span></div>
<div class="cl" style="top:426px"><span class="cc">    /*@ assignable frameCatch;</span></div>
<div class="cl" style="top:443px"><span class="cc">      @ accessible footprintCatch;</span></div>
<div class="cl" style="top:460px"><span class="cc">      @*/</span></div>
<div class="cl" style="top:477px"><span class="cn">    </span><span class="cr">\abstract_statement</span><span class="cn"> CatchStmt;</span></div>
<div class="cl" style="top:494px"><span class="cn">}</span></div>
</div>
<span class="ln" style="left:322px;width:17.5px;top:69px">1</span>
<svg class="i" style="left:341px;top:72px;width:9px;height:9px" viewBox="0 0 9 9"><rect x="0.5" y="0.5" width="8" height="8" fill="#fff" stroke="#808080"/><path d="M2 4.5 H7" stroke="#808080"/></svg>
<span class="ln" style="left:322px;width:17.5px;top:86px">2</span>
<span class="ln" style="left:322px;width:17.5px;top:103px">3</span>
<span class="ln" style="left:322px;width:17.5px;top:120px">4</span>
<span class="ln" style="left:322px;width:17.5px;top:137px">5</span>
<svg class="i" style="left:341px;top:140px;width:9px;height:9px" viewBox="0 0 9 9"><rect x="0.5" y="0.5" width="8" height="8" fill="#fff" stroke="#808080"/><path d="M2 4.5 H7" stroke="#808080"/></svg>
<span class="ln" style="left:322px;width:17.5px;top:154px">6</span>
<span class="ln" style="left:322px;width:17.5px;top:171px">7</span>
<span class="ln" style="left:322px;width:17.5px;top:188px">8</span>
<span class="ln" style="left:322px;width:17.5px;top:205px">9</span>
<span class="ln" style="left:322px;width:17.5px;top:222px">10</span>
<span class="ln" style="left:322px;width:17.5px;top:239px">11</span>
<span class="ln" style="left:322px;width:17.5px;top:256px">12</span>
<span class="ln" style="left:322px;width:17.5px;top:273px">13</span>
<span class="ln" style="left:322px;width:17.5px;top:290px">14</span>
<svg class="i" style="left:341px;top:293px;width:9px;height:9px" viewBox="0 0 9 9"><rect x="0.5" y="0.5" width="8" height="8" fill="#fff" stroke="#808080"/><path d="M2 4.5 H7" stroke="#808080"/></svg>
<span class="ln" style="left:322px;width:17.5px;top:307px">15</span>
<span class="ln" style="left:322px;width:17.5px;top:324px">16</span>
<span class="ln" style="left:322px;width:17.5px;top:341px">17</span>
<span class="ln" style="left:322px;width:17.5px;top:358px">18</span>
<span class="ln" style="left:322px;width:17.5px;top:375px">19</span>
<span class="ln" style="left:322px;width:17.5px;top:392px">20</span>
<span class="ln" style="left:322px;width:17.5px;top:409px">21</span>
<svg class="i" style="left:341px;top:412px;width:9px;height:9px" viewBox="0 0 9 9"><rect x="0.5" y="0.5" width="8" height="8" fill="#fff" stroke="#808080"/><path d="M2 4.5 H7" stroke="#808080"/></svg>
<span class="ln" style="left:322px;width:17.5px;top:426px">22</span>
<span class="ln" style="left:322px;width:17.5px;top:443px">23</span>
<span class="ln" style="left:322px;width:17.5px;top:460px">24</span>
<span class="ln" style="left:322px;width:17.5px;top:477px">25</span>
<span class="ln" style="left:322px;width:17.5px;top:494px">26</span>
<svg class="i" style="left:341px;top:497px;width:9px;height:9px" viewBox="0 0 9 9"><rect x="0.5" y="0.5" width="8" height="8" fill="#fff" stroke="#808080"/><path d="M2 4.5 H7" stroke="#808080"/></svg>
<span class="ln" style="left:322px;width:17.5px;top:511px">27</span>
<span class="ln" style="left:322px;width:17.5px;top:528px">28</span>
<span class="ln" style="left:322px;width:17.5px;top:545px">29</span>
<span class="ln" style="left:322px;width:17.5px;top:562px">30</span>
<div style="left:916px;top:68px;width:16px;height:564px;background:#eeeeee;border-left:1px solid #7a8a99;border-right:1px solid #7a8a99;box-sizing:border-box;box-shadow:inset 1px 0 0 #c5d7ea"></div>
<div style="left:916px;top:68px;width:16px;height:16px;background:#fff;border:1px solid #7a8a99;border-top:none;box-sizing:border-box"></div>
<svg class="i" style="left:919.8px;top:73px;width:7.4px;height:4.2px" viewBox="0 0 7.4 4.2"><path d="M0 4.2 L3.7 0 L7.4 4.2 Z" fill="#2a2a2a"/></svg>
<div style="left:917px;top:84px;width:14px;height:1px;background:#c5d7ea"></div>
<div style="left:916px;top:616px;width:16px;height:16px;background:#fff;border:1px solid #7a8a99;box-sizing:border-box"></div>
<svg class="i" style="left:919.5px;top:621.5px;width:8.4px;height:4.6px" viewBox="0 0 8.4 4.6"><path d="M0 0 L4.2 4.6 L8.4 0 Z" fill="#2a2a2a"/></svg>
<div style="left:320px;top:632px;width:612px;height:1px;background:#7a8a99"></div>
<div style="left:320px;top:633px;width:614px;height:2px;background:#fff"></div>
<div style="left:932px;top:67px;width:2px;height:568px;background:#fff"></div>
<div style="left:934px;top:66px;width:8px;height:569px;background:#eeeeee"></div>
<svg class="i" style="left:934px;top:68px;width:8px;height:564px" viewBox="0 0 8 564"><defs><pattern id="sp" width="8" height="4" patternUnits="userSpaceOnUse"><rect x="3" y="2" width="1" height="1" fill="#687c91"/><rect x="5" y="0" width="1" height="1" fill="#687c91"/><rect x="2" y="1" width="1" height="1" fill="#fbfbfb"/><rect x="4" y="3" width="1" height="1" fill="#fbfbfb"/></pattern></defs><rect x="0" y="1" width="8" height="563" fill="url(#sp)"/></svg>
<div style="left:942px;top:66px;width:620px;height:567px;background:#6e8195"></div>
<div style="left:944px;top:68px;width:602px;height:549px;background:#fff"></div>
<div style="left:974px;top:68px;width:572px;height:17px;background:#ffffdc"></div>
<div style="left:973px;top:68px;width:1px;height:549px;background:#dddddd"></div>
<div style="left:974px;top:68px;width:572px;height:549px;overflow:hidden">
<div class="cl" style="top:1px"><span class="cc">/*@ ae_constraint</span></div>
<div class="cl" style="top:18px"><span class="cc">  @   \disjoint(footprintRollback, frameTry);</span></div>
<div class="cl" style="top:35px"><span class="cc">  @*/</span></div>
<div class="cl" style="top:69px"><span class="ck">if</span><span class="cn"> (</span></div>
<div class="cl" style="top:86px"><span class="cc">    /*@ assignable \nothing;</span></div>
<div class="cl" style="top:103px"><span class="cc">      @ accessible footprintTry;</span></div>
<div class="cl" style="top:120px"><span class="cc">      @ normal_behavior</span></div>
<div class="cl" style="top:137px"><span class="cc">      @   ensures (boolean) \result &lt;==&gt; !throwsExcTryStmt(\value(footprintTry));</span></div>
<div class="cl" style="top:154px"><span class="cc">      @ exceptional_behavior requires false;</span></div>
<div class="cl" style="top:171px"><span class="cc">      @*/</span></div>
<div class="cl" style="top:188px"><span class="cn">    </span><span class="cr">\abstract_expression</span><span class="cn"> </span><span class="ck">boolean</span><span class="cn"> e</span></div>
<div class="cl" style="top:205px"><span class="cn">) {</span></div>
<div class="cl" style="top:222px"><span class="cc">    /*@ assignable frameTry;</span></div>
<div class="cl" style="top:239px"><span class="cc">      @ accessible footprintTry;</span></div>
<div class="cl" style="top:256px"><span class="cc">      @ exceptional_behavior requires</span></div>
<div class="cl" style="top:273px"><span class="cc">      @   throwsExcTryStmt(\value(footprintTry));</span></div>
<div class="cl" style="top:290px"><span class="cc">      @*/</span></div>
<div class="cl" style="top:307px"><span class="cn">    </span><span class="cr">\abstract_statement</span><span class="cn"> TryStmt;</span></div>
<div class="cl" style="top:324px"><span class="cn">} </span><span class="ck">else</span><span class="cn"> {</span></div>
<div class="cl" style="top:341px"><span class="cc">    /*@ assignable \hasTo(frameTry);</span></div>
<div class="cl" style="top:358px"><span class="cc">      @ accessible footprintRollback;</span></div>
<div class="cl" style="top:375px"><span class="cc">      @*/</span></div>
<div class="cl" style="top:392px"><span class="cn">    </span><span class="cr">\abstract_statement</span><span class="cn"> Rollback;</span></div>
<div class="cl" style="top:426px"><span class="cc">    /*@ assignable frameCatch;</span></div>
<div class="cl" style="top:443px"><span class="cc">      @ accessible footprintCatch;</span></div>
<div class="cl" style="top:460px"><span class="cc">      @*/</span></div>
<div class="cl" style="top:477px"><span class="cn">    </span><span class="cr">\abstract_statement</span><span class="cn"> CatchStmt;</span></div>
<div class="cl" style="top:494px"><span class="cn">}</span></div>
</div>
<span class="ln" style="left:944px;width:17.5px;top:69px">1</span>
<svg class="i" style="left:963px;top:72px;width:9px;height:9px" viewBox="0 0 9 9"><rect x="0.5" y="0.5" width="8" height="8" fill="#fff" stroke="#808080"/><path d="M2 4.5 H7" stroke="#808080"/></svg>
<span class="ln" style="left:944px;width:17.5px;top:86px">2</span>
<span class="ln" style="left:944px;width:17.5px;top:103px">3</span>
<span class="ln" style="left:944px;width:17.5px;top:120px">4</span>
<span class="ln" style="left:944px;width:17.5px;top:137px">5</span>
<span class="ln" style="left:944px;width:17.5px;top:154px">6</span>
<svg class="i" style="left:963px;top:157px;width:9px;height:9px" viewBox="0 0 9 9"><rect x="0.5" y="0.5" width="8" height="8" fill="#fff" stroke="#808080"/><path d="M2 4.5 H7" stroke="#808080"/></svg>
<span class="ln" style="left:944px;width:17.5px;top:171px">7</span>
<span class="ln" style="left:944px;width:17.5px;top:188px">8</span>
<span class="ln" style="left:944px;width:17.5px;top:205px">9</span>
<span class="ln" style="left:944px;width:17.5px;top:222px">10</span>
<span class="ln" style="left:944px;width:17.5px;top:239px">11</span>
<span class="ln" style="left:944px;width:17.5px;top:256px">12</span>
<span class="ln" style="left:944px;width:17.5px;top:273px">13</span>
<svg class="i" style="left:963px;top:276px;width:9px;height:9px" viewBox="0 0 9 9"><rect x="0.5" y="0.5" width="8" height="8" fill="#fff" stroke="#808080"/><path d="M2 4.5 H7" stroke="#808080"/></svg>
<span class="ln" style="left:944px;width:17.5px;top:290px">14</span>
<svg class="i" style="left:963px;top:293px;width:9px;height:9px" viewBox="0 0 9 9"><rect x="0.5" y="0.5" width="8" height="8" fill="#fff" stroke="#808080"/><path d="M2 4.5 H7" stroke="#808080"/></svg>
<span class="ln" style="left:944px;width:17.5px;top:307px">15</span>
<span class="ln" style="left:944px;width:17.5px;top:324px">16</span>
<span class="ln" style="left:944px;width:17.5px;top:341px">17</span>
<span class="ln" style="left:944px;width:17.5px;top:358px">18</span>
<span class="ln" style="left:944px;width:17.5px;top:375px">19</span>
<span class="ln" style="left:944px;width:17.5px;top:392px">20</span>
<span class="ln" style="left:944px;width:17.5px;top:409px">21</span>
<svg class="i" style="left:963px;top:412px;width:9px;height:9px" viewBox="0 0 9 9"><rect x="0.5" y="0.5" width="8" height="8" fill="#fff" stroke="#808080"/><path d="M2 4.5 H7" stroke="#808080"/></svg>
<span class="ln" style="left:944px;width:17.5px;top:426px">22</span>
<span class="ln" style="left:944px;width:17.5px;top:443px">23</span>
<span class="ln" style="left:944px;width:17.5px;top:460px">24</span>
<span class="ln" style="left:944px;width:17.5px;top:477px">25</span>
<span class="ln" style="left:944px;width:17.5px;top:494px">26</span>
<svg class="i" style="left:963px;top:497px;width:9px;height:9px" viewBox="0 0 9 9"><rect x="0.5" y="0.5" width="8" height="8" fill="#fff" stroke="#808080"/><path d="M2 4.5 H7" stroke="#808080"/></svg>
<span class="ln" style="left:944px;width:17.5px;top:511px">27</span>
<span class="ln" style="left:944px;width:17.5px;top:528px">28</span>
<span class="ln" style="left:944px;width:17.5px;top:545px">29</span>
<span class="ln" style="left:944px;width:17.5px;top:562px">30</span>
<div style="left:1546px;top:68px;width:16px;height:549px;background:#eeeeee;border-left:1px solid #7a8a99;border-right:1px solid #7a8a99;box-sizing:border-box;box-shadow:inset 1px 0 0 #c5d7ea"></div>
<div style="left:1546px;top:68px;width:16px;height:16px;background:#fff;border:1px solid #7a8a99;border-top:none;box-sizing:border-box"></div>
<svg class="i" style="left:1549.8px;top:73px;width:7.4px;height:4.2px" viewBox="0 0 7.4 4.2"><path d="M0 4.2 L3.7 0 L7.4 4.2 Z" fill="#2a2a2a"/></svg>
<div style="left:1547px;top:84px;width:14px;height:1px;background:#c5d7ea"></div>
<div style="left:1546px;top:601px;width:16px;height:16px;background:#fff;border:1px solid #7a8a99;box-sizing:border-box"></div>
<svg class="i" style="left:1549.5px;top:606.5px;width:8.4px;height:4.6px" viewBox="0 0 8.4 4.6"><path d="M0 0 L4.2 4.6 L8.4 0 Z" fill="#2a2a2a"/></svg>
<div style="left:1546px;top:617px;width:16px;height:15px;background:#eeeeee;border-right:1px solid #7a8a99;box-sizing:border-box"></div>
<div style="left:944px;top:617px;width:30px;height:15px;background:#eeeeee"></div>
<div style="left:974px;top:617px;width:572px;height:15px;background:#eeeeee;border-top:1px solid #7a8a99;box-sizing:border-box;box-shadow:inset 0 1px 0 #c5d7ea"></div>
<div style="left:974px;top:617px;width:16px;height:15px;background:#fff;border-top:1px solid #7a8a99;box-sizing:border-box"></div>
<svg class="i" style="left:978.6px;top:621px;width:4.6px;height:8px" viewBox="0 0 4.6 8"><path d="M4.6 0 L0.1 4 L4.6 8 Z" fill="#2a2a2a"/></svg>
<div style="left:989px;top:617px;width:477px;height:15px;background:linear-gradient(#ffffff,#dce8f5 40%,#b8cfe5);border:1px solid #6382bf;border-bottom:none;box-sizing:border-box;box-shadow:inset 1px 1px 0 #fff"></div>
<svg class="i" style="left:1224px;top:621px;width:6px;height:8px" viewBox="0 0 6 8"><path d="M0.5 0 V8 M2.5 0 V8 M4.5 0 V8" stroke="#6382bf" stroke-width="1"/></svg>
<div style="left:1530px;top:617px;width:16px;height:15px;background:#fff;border:1px solid #7a8a99;border-bottom:none;box-sizing:border-box"></div>
<svg class="i" style="left:1536px;top:621px;width:4.6px;height:8px" viewBox="0 0 4.6 8"><path d="M0 0 L4.5 4 L0 8 Z" fill="#2a2a2a"/></svg>
<div style="left:942px;top:632px;width:620px;height:1px;background:#7a8a99"></div>
<div style="left:942px;top:633px;width:620px;height:2px;background:#fff"></div>
</body></html>
